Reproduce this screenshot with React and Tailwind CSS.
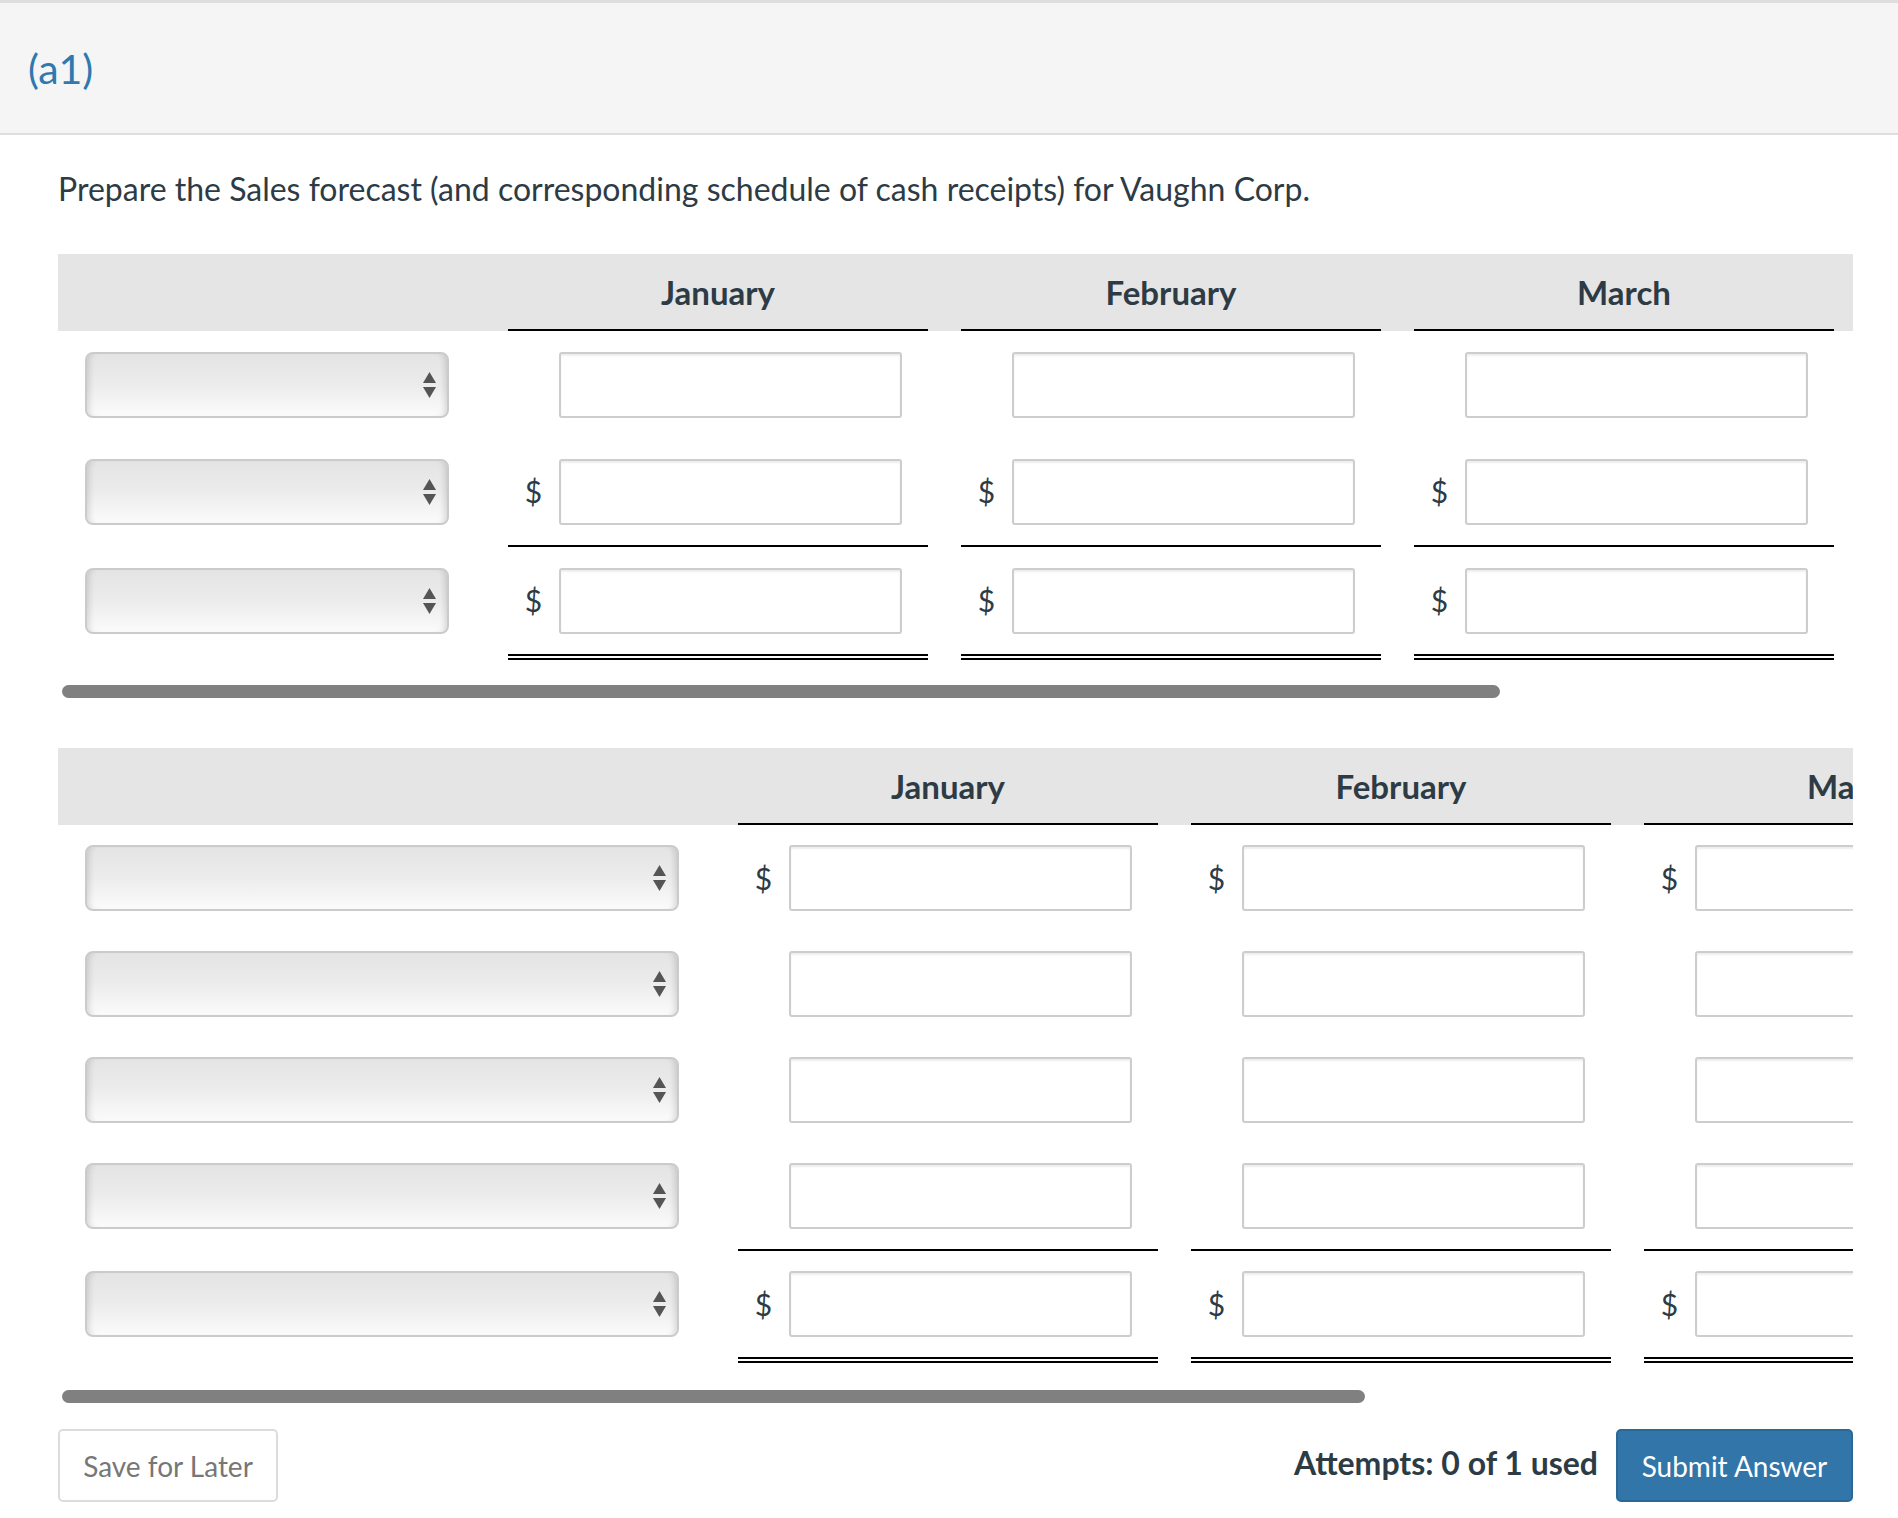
import React from 'react';

const months = ['January', 'February', 'March'];

function Arrows() {
  return (
    <svg width="13" height="26" viewBox="0 0 13 26" className="shrink-0">
      <path d="M6.5 0L13 11H0z" fill="#555555" />
      <path d="M0 15h13L6.5 26z" fill="#555555" />
    </svg>
  );
}

function Select({ wide }) {
  return (
    <div
      className={`flex h-[66px] items-center justify-end rounded-[8px] border-2 border-[#cbcbcb] bg-gradient-to-b from-[#e4e4e4] via-[#ececec] to-[#fbfbfb] pr-[11px] shadow-[inset_7px_0_6px_-5px_rgba(0,0,0,0.14),inset_-7px_0_6px_-5px_rgba(0,0,0,0.14)] ${
        wide ? 'w-[594px]' : 'w-[364px]'
      }`}
    >
      <Arrows />
    </div>
  );
}

function Cell({ dollar, line, tall }) {
  let size = tall ? 'h-[107px]' : 'h-[106px]';
  if (line === 'single') size = tall ? 'h-[109px] border-b-2 border-black' : 'h-[108px] border-b-2 border-black';
  if (line === 'double')
    size = tall
      ? 'h-[113px] border-b-[6px] border-double border-black'
      : 'h-[112px] border-b-[6px] border-double border-black';
  return (
    <div className={`mr-[33px] flex w-[420px] shrink-0 items-start ${size}`}>
      <div className={`flex w-[51px] items-center justify-center text-[30px] ${tall ? 'h-[107px]' : 'h-[106px]'}`}>
        {dollar ? '$' : ''}
      </div>
      <div className={`flex items-center ${tall ? 'h-[107px]' : 'h-[106px]'}`}>
        <div className="h-[66px] w-[343px] rounded-[3px] border-2 border-[#cdcdcd] bg-white shadow-[inset_0_2px_2px_rgba(0,0,0,0.07)]" />
      </div>
    </div>
  );
}

function Table({ rows, wide }) {
  const tall = !wide;
  return (
    <div className="w-full overflow-hidden">
      <div className="flex h-[77px] w-full bg-[#e5e5e5]">
        <div className={`shrink-0 ${wide ? 'w-[680px]' : 'w-[450px]'}`} />
        {months.map((m) => (
          <div
            key={m}
            className="mr-[33px] flex w-[420px] shrink-0 items-center justify-center border-b-2 border-black pt-[2px] text-[33px] font-bold"
          >
            {m}
          </div>
        ))}
      </div>
      {rows.map((r, i) => (
        <div key={i} className="flex">
          <div
            className={`flex shrink-0 items-center pl-[27px] ${wide ? 'w-[680px]' : 'w-[450px]'} ${
              tall ? 'h-[107px]' : 'h-[106px]'
            }`}
          >
            <Select wide={wide} />
          </div>
          {months.map((m) => (
            <Cell key={m} dollar={r.dollar} line={r.line} tall={tall} />
          ))}
        </div>
      ))}
    </div>
  );
}

const salesRows = [
  { dollar: false },
  { dollar: true, line: 'single' },
  { dollar: true, line: 'double' },
];

const cashRows = [
  { dollar: true },
  { dollar: false },
  { dollar: false },
  { dollar: false, line: 'single' },
  { dollar: true, line: 'double' },
];

export default function App() {
  return (
    <div className="min-h-screen bg-white font-['Lato',_sans-serif] text-[#2d3b45]">
      <div className="flex h-[135px] items-center border-t-[3px] border-b-2 border-[#dedede] bg-[#f5f5f5] pl-[28px]">
        <h2 className="text-[41px] leading-none text-[#2e79b0]">(a1)</h2>
      </div>

      <div className="pl-[58px] pr-[45px]">
        <p className="mt-[32px] text-[32px] leading-[44px]">
          Prepare the Sales forecast (and corresponding schedule of cash receipts) for Vaughn Corp.
        </p>

        <div className="mt-[43px]">
          <Table rows={salesRows} />
        </div>
        <div className="ml-[4px] mt-[25px] h-[13px] w-[1438px] rounded-full bg-[#808080]" />

        <div className="mt-[50px]">
          <Table rows={cashRows} wide />
        </div>
        <div className="ml-[4px] mt-[27px] h-[13px] w-[1303px] rounded-full bg-[#808080]" />

        <div className="mt-[26px] flex items-center justify-between">
          <button className="h-[73px] w-[220px] rounded-[5px] border-2 border-[#dcdcdc] bg-white text-[28px] text-[#777777]">
            Save for Later
          </button>
          <div className="flex items-center gap-[18px]">
            <span className="-mt-[6px] text-[32px] font-bold">Attempts: 0 of 1 used</span>
            <button className="h-[73px] w-[237px] rounded-[5px] border-2 border-[#2b6896] bg-[#3175a9] text-[28px] text-white">
              Submit Answer
            </button>
          </div>
        </div>
      </div>
    </div>
  );
}
